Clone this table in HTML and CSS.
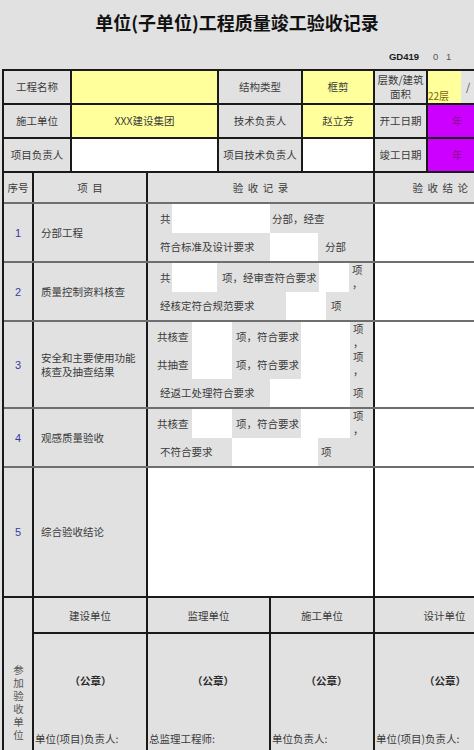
FILE: index.html
```html
<!DOCTYPE html>
<html lang="zh">
<head>
<meta charset="utf-8">
<title>单位(子单位)工程质量竣工验收记录</title>
<link rel="stylesheet" href="styles.css">
</head>
<body>
<div class="title">单位(子单位)工程质量竣工验收记录</div>
<div class="code"><b>GD419</b><span>0</span><span>1</span></div>
<div class="sheet">
  <div class="info">
    <div>工程名称</div>
    <div class="yel"></div>
    <div>结构类型</div>
    <div class="yel">框剪</div>
    <div>层数/建筑<br>面积</div>
    <div class="area"><span class="floor">22层</span><span class="slash">/</span></div>

    <div>施工单位</div>
    <div class="yel">XXX建设集团</div>
    <div>技术负责人</div>
    <div class="yel">赵立芳</div>
    <div>开工日期</div>
    <div class="pur">年</div>

    <div>项目负责人</div>
    <div class="wht"></div>
    <div>项目技术负责人</div>
    <div class="wht"></div>
    <div>竣工日期</div>
    <div class="pur">年</div>
  </div>

  <div class="mrow mhead">
    <div class="hc">序号</div>
    <div class="hc sp">项目</div>
    <div class="hc sp">验收记录</div>
    <div class="hc sp end">验收结论</div>
  </div>

  <div class="mrow r57">
    <div class="num">1</div>
    <div class="item">分部工程</div>
    <div class="rec">
      <div class="line">
        <div class="seg s24 pl12">共</div>
        <div class="seg w s98"></div>
        <div class="seg rest pl2">分部，经查</div>
      </div>
      <div class="line">
        <div class="seg s122 pl12">符合标准及设计要求</div>
        <div class="seg w s48"></div>
        <div class="seg rest pl7">分部</div>
      </div>
    </div>
    <div class="res"></div>
  </div>

  <div class="mrow r57">
    <div class="num">2</div>
    <div class="item">质量控制资料核查</div>
    <div class="rec">
      <div class="line">
        <div class="seg s24 pl12">共</div>
        <div class="seg w s45"></div>
        <div class="seg s102 pl5">项，经审查符合要求</div>
        <div class="seg w s30"></div>
        <div class="seg rest pl3 stack">项<br>，</div>
      </div>
      <div class="line">
        <div class="seg s138 pl12">经核定符合规范要求</div>
        <div class="seg w s40"></div>
        <div class="seg rest pl5">项</div>
      </div>
    </div>
    <div class="res"></div>
  </div>

  <div class="mrow r85">
    <div class="num">3</div>
    <div class="item">安全和主要使用功能<br>核查及抽查结果</div>
    <div class="rec">
      <div class="line">
        <div class="seg s44 pl9">共核查</div>
        <div class="seg w s40"></div>
        <div class="seg s69 pl4">项，符合要求</div>
        <div class="seg w s49"></div>
        <div class="seg rest pl3 stack">项<br>，</div>
      </div>
      <div class="line">
        <div class="seg s44 pl9">共抽查</div>
        <div class="seg w s40"></div>
        <div class="seg s69 pl4">项，符合要求</div>
        <div class="seg w s49"></div>
        <div class="seg rest pl3 stack">项<br>，</div>
      </div>
      <div class="line">
        <div class="seg s122 pl12">经返工处理符合要求</div>
        <div class="seg w s80"></div>
        <div class="seg rest pl3">项</div>
      </div>
    </div>
    <div class="res"></div>
  </div>

  <div class="mrow r57">
    <div class="num">4</div>
    <div class="item">观感质量验收</div>
    <div class="rec">
      <div class="line">
        <div class="seg s44 pl9">共核查</div>
        <div class="seg w s40"></div>
        <div class="seg s69 pl4">项，符合要求</div>
        <div class="seg w s49"></div>
        <div class="seg rest pl3 stack">项<br>，</div>
      </div>
      <div class="line">
        <div class="seg s84 pl12">不符合要求</div>
        <div class="seg w s86"></div>
        <div class="seg rest pl3">项</div>
      </div>
    </div>
    <div class="res"></div>
  </div>

  <div class="mrow r128">
    <div class="num">5</div>
    <div class="item">综合验收结论</div>
    <div class="rec blank"></div>
    <div class="res"></div>
  </div>

  <div class="sign">
    <div class="vert"><span>参加验收单位</span></div>
    <div class="sh">建设单位</div>
    <div class="sh">监理单位</div>
    <div class="sh">施工单位</div>
    <div class="sh">设计单位</div>
    <div class="sb"><div class="stamp">（公章）</div><div class="who">单位(项目)负责人:</div></div>
    <div class="sb"><div class="stamp shift">（公章）</div><div class="who">总监理工程师:</div></div>
    <div class="sb"><div class="stamp shift">（公章）</div><div class="who">单位负责人:</div></div>
    <div class="sb"><div class="stamp">（公章）</div><div class="who">单位(项目)负责人:</div></div>
  </div>
</div>
</body>
</html>
```

FILE: styles.css
```css
html, body {
  overflow: hidden;
}
body {
  margin: 0;
  width: 474px;
  height: 750px;
  background: #e1e1e1;
  font-family: "Noto Sans CJK SC", sans-serif;
  font-size: 10.5px;
  color: #3a3a3a;
}

.title {
  height: 44px;
  line-height: 44px;
  text-align: center;
  font-size: 18px;
  font-weight: 700;
  color: #111;
}

.code {
  height: 25px;
  line-height: 25px;
  display: flex;
  justify-content: flex-end;
  padding-right: 20px;
  font-family: "Liberation Sans", sans-serif;
  font-size: 9.5px;
  color: #555;
}
.code b {
  color: #1a1a1a;
  margin-right: 9px;
}
.code span {
  margin-left: 5px;
  width: 8px;
}

.sheet {
  margin-left: 2px;
  border-left: 2px solid #1a1a1a;
  width: 510px;
}

/* top information block */
.info {
  display: grid;
  grid-template-columns: 66px 145px 82px 70px 51px 86px;
  grid-auto-rows: 32px;
  gap: 2px;
  padding: 2px 0;
  background: #1a1a1a;
}
.info > div {
  background: #e1e1e1;
  display: flex;
  align-items: center;
  justify-content: center;
  text-align: center;
  line-height: 14px;
  white-space: nowrap;
}
.info .yel {
  background: #ffff9c;
}
.info .wht {
  background: #ffffff;
}
.info .pur {
  background: #cc00ff;
  justify-content: flex-start;
  padding-left: 24px;
  color: #8a0c8c;
}
.info .area {
  justify-content: flex-start;
  align-items: stretch;
  background: #e4e4e4;
}
.floor {
  width: 33px;
  background: #ffff9c;
  display: flex;
  align-items: flex-end;
  font-size: 10px;
  line-height: 12px;
  color: #7a6400;
  padding-bottom: 1px;
}
.slash {
  display: flex;
  align-items: center;
  padding-left: 5px;
  color: #444;
}

/* middle acceptance rows */
.mrow {
  display: grid;
  grid-template-columns: 28px 112px 225px 139px;
  column-gap: 2px;
  background: #1a1a1a;
  border-top: 2px solid #6e6e6e;
}
.mrow > div {
  background: #e1e1e1;
}
.mhead {
  height: 29px;
  border-top: none;
}
.r57 { height: 57px; }
.r85 { height: 85px; }
.r128 { height: 128px; }

.hc {
  display: flex;
  align-items: center;
  justify-content: center;
}
.hc.sp {
  letter-spacing: 4.5px;
  padding-left: 4.5px;
}
.hc.sp.end {
  padding-left: 0;
  padding-right: 4px;
}

.num {
  display: flex;
  align-items: center;
  justify-content: center;
  font-family: "Liberation Sans", sans-serif;
  font-size: 11px;
  color: #3b3b9e;
}
.item {
  display: flex;
  align-items: center;
  padding-left: 7px;
  line-height: 14px;
}
.rec {
  display: flex;
  flex-direction: column;
}
.mrow .rec.blank,
.mrow .res {
  background: #ffffff;
}
.line {
  flex: 1;
  display: flex;
}
.seg {
  box-sizing: border-box;
  display: flex;
  align-items: center;
  white-space: nowrap;
  flex: none;
}
.seg.w { background: #ffffff; }
.seg.rest { flex: 1; }
.seg.stack { line-height: 14px; }

.s24 { width: 24px; }
.s30 { width: 30px; }
.s40 { width: 40px; }
.s44 { width: 44px; }
.s45 { width: 45px; }
.s48 { width: 48px; }
.s49 { width: 49px; }
.s69 { width: 69px; }
.s80 { width: 80px; }
.s84 { width: 84px; }
.s86 { width: 86px; }
.s98 { width: 98px; }
.s102 { width: 102px; }
.s122 { width: 122px; }
.s138 { width: 138px; }

.pl2 { padding-left: 2px; }
.pl3 { padding-left: 3px; }
.pl4 { padding-left: 4px; }
.pl5 { padding-left: 5px; }
.pl7 { padding-left: 7px; }
.pl9 { padding-left: 9px; }
.pl12 { padding-left: 12px; }

/* signature block */
.sign {
  display: grid;
  grid-template-columns: 28px 112px 121px 102px 139px;
  grid-template-rows: 34px 124px;
  gap: 2px;
  background: #1a1a1a;
  border-top: 2px solid #1a1a1a;
}
.sign > div {
  background: #e1e1e1;
}
.vert {
  grid-row: span 2;
  display: flex;
  justify-content: center;
  padding-top: 67px;
  color: #555;
}
.vert span {
  writing-mode: vertical-rl;
  letter-spacing: 2.5px;
  line-height: 14px;
}
.sh {
  display: flex;
  align-items: center;
  justify-content: center;
}
.sb {
  display: flex;
  flex-direction: column;
  padding-left: 1px;
}
.stamp {
  margin-top: 38px;
  height: 18px;
  line-height: 18px;
  text-align: center;
  font-weight: 700;
  color: #2a2a2a;
}
.stamp.shift {
  padding-left: 8px;
}
.who {
  margin-top: 42px;
  line-height: 14px;
  white-space: nowrap;
}
```
